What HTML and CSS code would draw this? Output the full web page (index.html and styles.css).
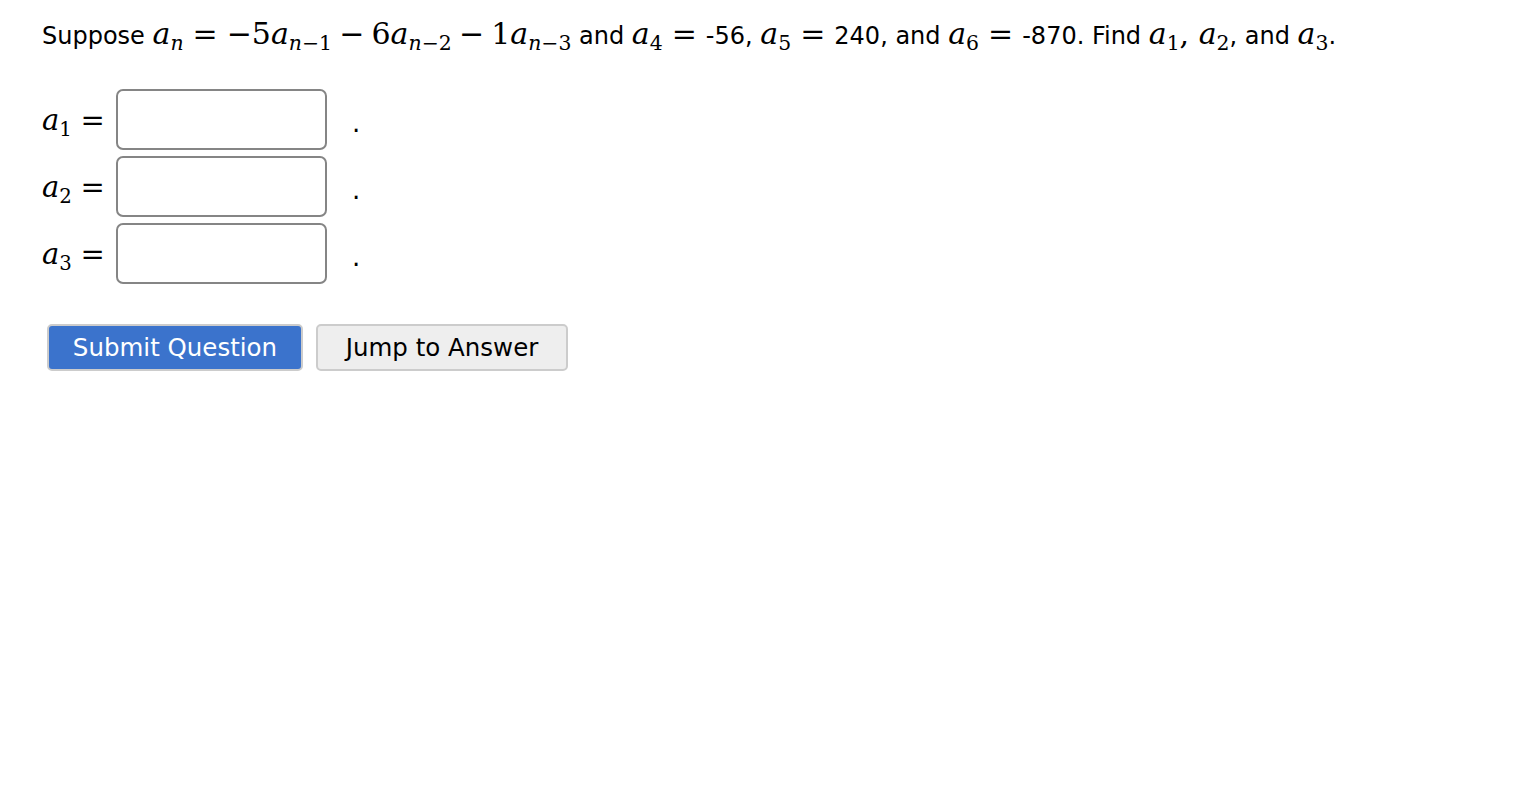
FILE: index.html
```html
<!DOCTYPE html>
<html lang="en">
  <head>
    <meta charset="UTF-8" />
    <meta name="viewport" content="width=device-width, initial-scale=1.0" />
    <title>Question</title>
    <link rel="stylesheet" href="styles.css">
  </head>
  <body>
    <div class="question">
      <p class="prompt">
        Suppose
        <span class="math"><i>a</i><sub><i>n</i></sub><span class="rel">=</span>−5<i>a</i><sub><i>n</i>−1</sub><span class="bin">−</span>6<i>a</i><sub><i>n</i>−2</sub><span class="bin">−</span>1<i>a</i><sub><i>n</i>−3</sub></span>
        and
        <span class="math"><i>a</i><sub>4</sub><span class="rel">=</span></span>-56,
        <span class="math"><i>a</i><sub>5</sub><span class="rel">=</span></span>240, and
        <span class="math"><i>a</i><sub>6</sub><span class="rel">=</span></span>-870. Find
        <span class="math"><i>a</i><sub>1</sub>, <i>a</i><sub>2</sub></span>, and
        <span class="math"><i>a</i><sub>3</sub></span>.
      </p>

      <div class="answers">
        <div class="answer-row">
          <label class="math answer-label" for="a1"><i>a</i><sub>1</sub><span class="rel">=</span></label>
          <input class="answer-input" id="a1" type="text" />
          <span class="answer-dot">.</span>
        </div>
        <div class="answer-row">
          <label class="math answer-label" for="a2"><i>a</i><sub>2</sub><span class="rel">=</span></label>
          <input class="answer-input" id="a2" type="text" />
          <span class="answer-dot">.</span>
        </div>
        <div class="answer-row">
          <label class="math answer-label" for="a3"><i>a</i><sub>3</sub><span class="rel">=</span></label>
          <input class="answer-input" id="a3" type="text" />
          <span class="answer-dot">.</span>
        </div>
      </div>

      <div class="actions">
        <button class="btn btn-primary" type="button">Submit Question</button>
        <button class="btn btn-secondary" type="button">Jump to Answer</button>
      </div>
    </div>
  </body>
</html>
```

FILE: styles.css
```css
body {
  margin: 0;
  background: #fff;
  color: #000;
  font-family: "DejaVu Sans", Verdana, sans-serif;
  font-size: 24px;
}

.question {
  padding: 14px 42px;
}

.prompt {
  margin: 0 0 33px;
  line-height: 40px;
  white-space: nowrap;
}

.math {
  font-family: "DejaVu Serif", "Liberation Serif", serif;
  font-size: 30px;
  font-style: normal;
}
.math i {
  font-style: italic;
}
.math sub {
  font-size: 0.68em;
  vertical-align: -0.28em;
  line-height: 0;
}
.rel {
  margin: 0 0.3em;
}
.bin {
  margin: 0 0.24em;
}

.answers {
  display: flex;
  flex-direction: column;
  gap: 6px;
}

.answer-row {
  display: flex;
  align-items: center;
}

.answer-label {
  width: 74px;
  font-size: 29px;
}
.answer-label .rel {
  margin-right: 0;
}

.answer-input {
  box-sizing: border-box;
  width: 211px;
  height: 61px;
  border: 2px solid #858585;
  border-radius: 7px;
  background: #fff;
  font-size: 24px;
  padding: 0 10px;
  outline: none;
}

.answer-dot {
  margin-left: 25px;
  font-size: 26px;
  line-height: 1;
  position: relative;
  top: 3px;
}

.actions {
  display: flex;
  gap: 13px;
  margin-top: 40px;
  padding-left: 5px;
}

.btn {
  box-sizing: border-box;
  height: 47px;
  padding: 0 20px;
  font-family: "DejaVu Sans", Verdana, sans-serif;
  font-size: 24.5px;
  border: 2px solid #ccc;
  border-radius: 5px;
  cursor: pointer;
}
.btn-primary {
  width: 256px;
  background: #3b73cc;
  color: #fff;
}
.btn-secondary {
  width: 252px;
  background: #eee;
  color: #000;
}
```
